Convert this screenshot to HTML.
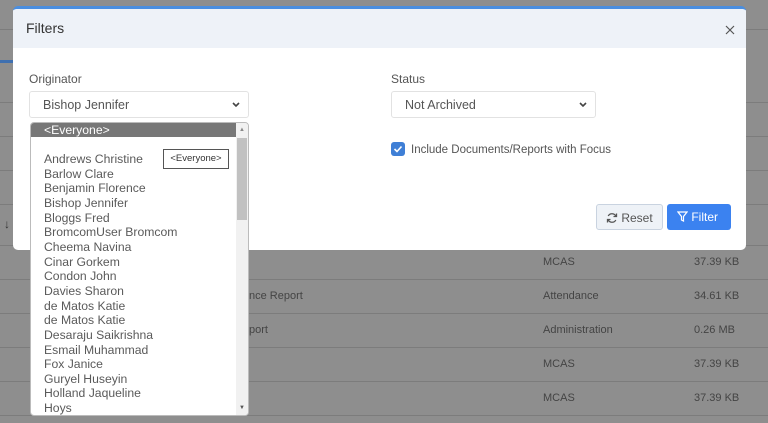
<!DOCTYPE html>
<html><head><meta charset="utf-8"><style>
*{box-sizing:border-box;margin:0;padding:0}
body{width:768px;height:423px;overflow:hidden;background:#8e8e8e;font-family:"Liberation Sans",sans-serif;position:relative}
.a{position:absolute}
.line{position:absolute;left:0;width:768px;height:1px;background:#7c7c7c}
.bt{position:absolute;font-size:11px;color:#444}
.modal{position:absolute;left:13px;top:6px;width:733px;height:244px;background:#fff;border-radius:5px;border-top:3px solid #4a8ee0;overflow:hidden}
.hdr{height:39px;background:#eef2f8;font-size:14px;color:#333;padding:11px 13px}
.lbl{position:absolute;font-size:12px;color:#555}
.sel{position:absolute;height:27px;border:1px solid #e2e2e2;border-radius:3px;font-size:12.5px;color:#555;padding:6px 13px;background:#fff}
.chev{position:absolute;right:7px;top:9px}
.list{position:absolute;left:30px;top:122px;width:219px;height:294px;background:#fff;border:1px solid #bbb;border-radius:4px;overflow:hidden;font-size:12.2px;color:#5a5a5a}
.list div.i{position:absolute;left:13px;line-height:14.65px}
</style></head><body>
<div class="a" style="left:0;top:60px;width:13px;height:3px;background:#3f70b0"></div>
<div class="line" style="top:29px"></div>
<div class="line" style="top:102px"></div>
<div class="line" style="top:136px"></div>
<div class="line" style="top:170px"></div>
<div class="line" style="top:204px"></div>
<div class="line" style="top:245px"></div>
<div class="line" style="top:279px"></div>
<div class="line" style="top:313px"></div>
<div class="line" style="top:347px"></div>
<div class="line" style="top:381px"></div>
<div class="line" style="top:415px"></div>
<div class="bt" style="left:543px;top:256px">MCAS</div><div class="bt" style="left:694px;top:256px">37.39 KB</div>
<div class="bt" style="left:543px;top:290px">Attendance</div><div class="bt" style="left:694px;top:290px">34.61 KB</div>
<div class="bt" style="left:543px;top:324px">Administration</div><div class="bt" style="left:694px;top:324px">0.26 MB</div>
<div class="bt" style="left:543px;top:358px">MCAS</div><div class="bt" style="left:694px;top:358px">37.39 KB</div>
<div class="bt" style="left:543px;top:392px">MCAS</div><div class="bt" style="left:694px;top:392px">37.39 KB</div>
<div class="bt" style="left:249px;top:290px">nce Report</div>
<div class="bt" style="left:249px;top:324px">port</div>
<div class="modal">
<div class="hdr">Filters</div>
<svg class="a" style="right:11px;top:16px" width="10" height="10" viewBox="0 0 10 10"><path d="M1 1l8 8M9 1l-8 8" stroke="#555" stroke-width="1.2"/></svg>
<div class="lbl" style="left:16px;top:63px">Originator</div>
<div class="sel" style="left:16px;top:82px;width:220px">Bishop Jennifer<svg class="chev" width="10" height="8" viewBox="0 0 10 8"><path d="M2 2l3 3 3-3" fill="none" stroke="#444" stroke-width="1.6"/></svg></div>
<div class="lbl" style="left:378px;top:63px">Status</div>
<div class="sel" style="left:378px;top:82px;width:205px">Not Archived<svg class="chev" width="10" height="8" viewBox="0 0 10 8"><path d="M2 2l3 3 3-3" fill="none" stroke="#444" stroke-width="1.6"/></svg></div>
<div class="a" style="left:378px;top:133px;width:14px;height:14px;background:#3f7fd6;border-radius:3px"><svg width="14" height="14" viewBox="0 0 14 14"><path d="M3.5 7l2.5 2.5 4.5-5" fill="none" stroke="#fff" stroke-width="1.6"/></svg></div>
<div class="lbl" style="left:398px;top:135px;font-size:11.5px">Include Documents/Reports with Focus</div>
<div class="a" style="left:583px;top:195px;width:67px;height:26px;border:1px solid #c9d3e0;background:#eef2f7;border-radius:3px;font-size:12px;color:#555;padding:6px 0 0 9px"><svg width="12" height="12" viewBox="0 0 12 12" style="vertical-align:-2px"><path d="M10 4.5A4.3 4.3 0 0 0 2.2 4M2 7.5A4.3 4.3 0 0 0 9.8 8" fill="none" stroke="#555" stroke-width="1.3"/><path d="M10.5 1.5v3h-3M1.5 10.5v-3h3" fill="none" stroke="#555" stroke-width="1.3"/></svg> Reset</div>
<div class="a" style="left:654px;top:195px;width:64px;height:26px;background:#3b82f0;border-radius:3px;font-size:12px;color:#fff;padding:6px 0 0 10px"><svg width="11" height="11" viewBox="0 0 11 11" style="vertical-align:-1px"><path d="M1 1h9L6.5 5.5V10L4.5 9V5.5z" fill="none" stroke="#fff" stroke-width="1.2"/></svg> Filter</div>
</div>
<div class="a" style="left:4px;top:217px;font-size:12px;color:#333">↓</div>
<div class="list">
<div class="a" style="left:0;top:0;width:205px;height:14px;background:#777;color:#fff;padding-left:13px;line-height:14px">&lt;Everyone&gt;</div>
<div class="a" style="right:0;top:0;width:12px;height:294px;background:#f1f1f1"></div>
<div class="a" style="right:1px;top:15px;width:10px;height:82px;background:#c1c1c1"></div>
<div class="a" style="right:3px;top:4px;font-size:6px;color:#888">▲</div>
<div class="a" style="right:3px;bottom:4px;font-size:6px;color:#555">▼</div>
<div class="a" style="left:132px;top:26px;width:66px;height:20px;border:1px solid #555;font-size:9.5px;color:#333;text-align:center;line-height:18px;background:#fff">&lt;Everyone&gt;</div>
<div class="i" style="top:29px">Andrews Christine</div>
<div class="i" style="top:43.7px">Barlow Clare</div>
<div class="i" style="top:58.3px">Benjamin Florence</div>
<div class="i" style="top:73px">Bishop Jennifer</div>
<div class="i" style="top:87.6px">Bloggs Fred</div>
<div class="i" style="top:102.3px">BromcomUser Bromcom</div>
<div class="i" style="top:116.9px">Cheema Navina</div>
<div class="i" style="top:131.6px">Cinar Gorkem</div>
<div class="i" style="top:146.2px">Condon John</div>
<div class="i" style="top:160.9px">Davies Sharon</div>
<div class="i" style="top:175.5px">de Matos Katie</div>
<div class="i" style="top:190.2px">de Matos Katie</div>
<div class="i" style="top:204.8px">Desaraju Saikrishna</div>
<div class="i" style="top:219.5px">Esmail Muhammad</div>
<div class="i" style="top:234.1px">Fox Janice</div>
<div class="i" style="top:248.8px">Guryel Huseyin</div>
<div class="i" style="top:263.4px">Holland Jaqueline</div>
<div class="i" style="top:278.1px">Hoys</div>
</div>
</body></html>
